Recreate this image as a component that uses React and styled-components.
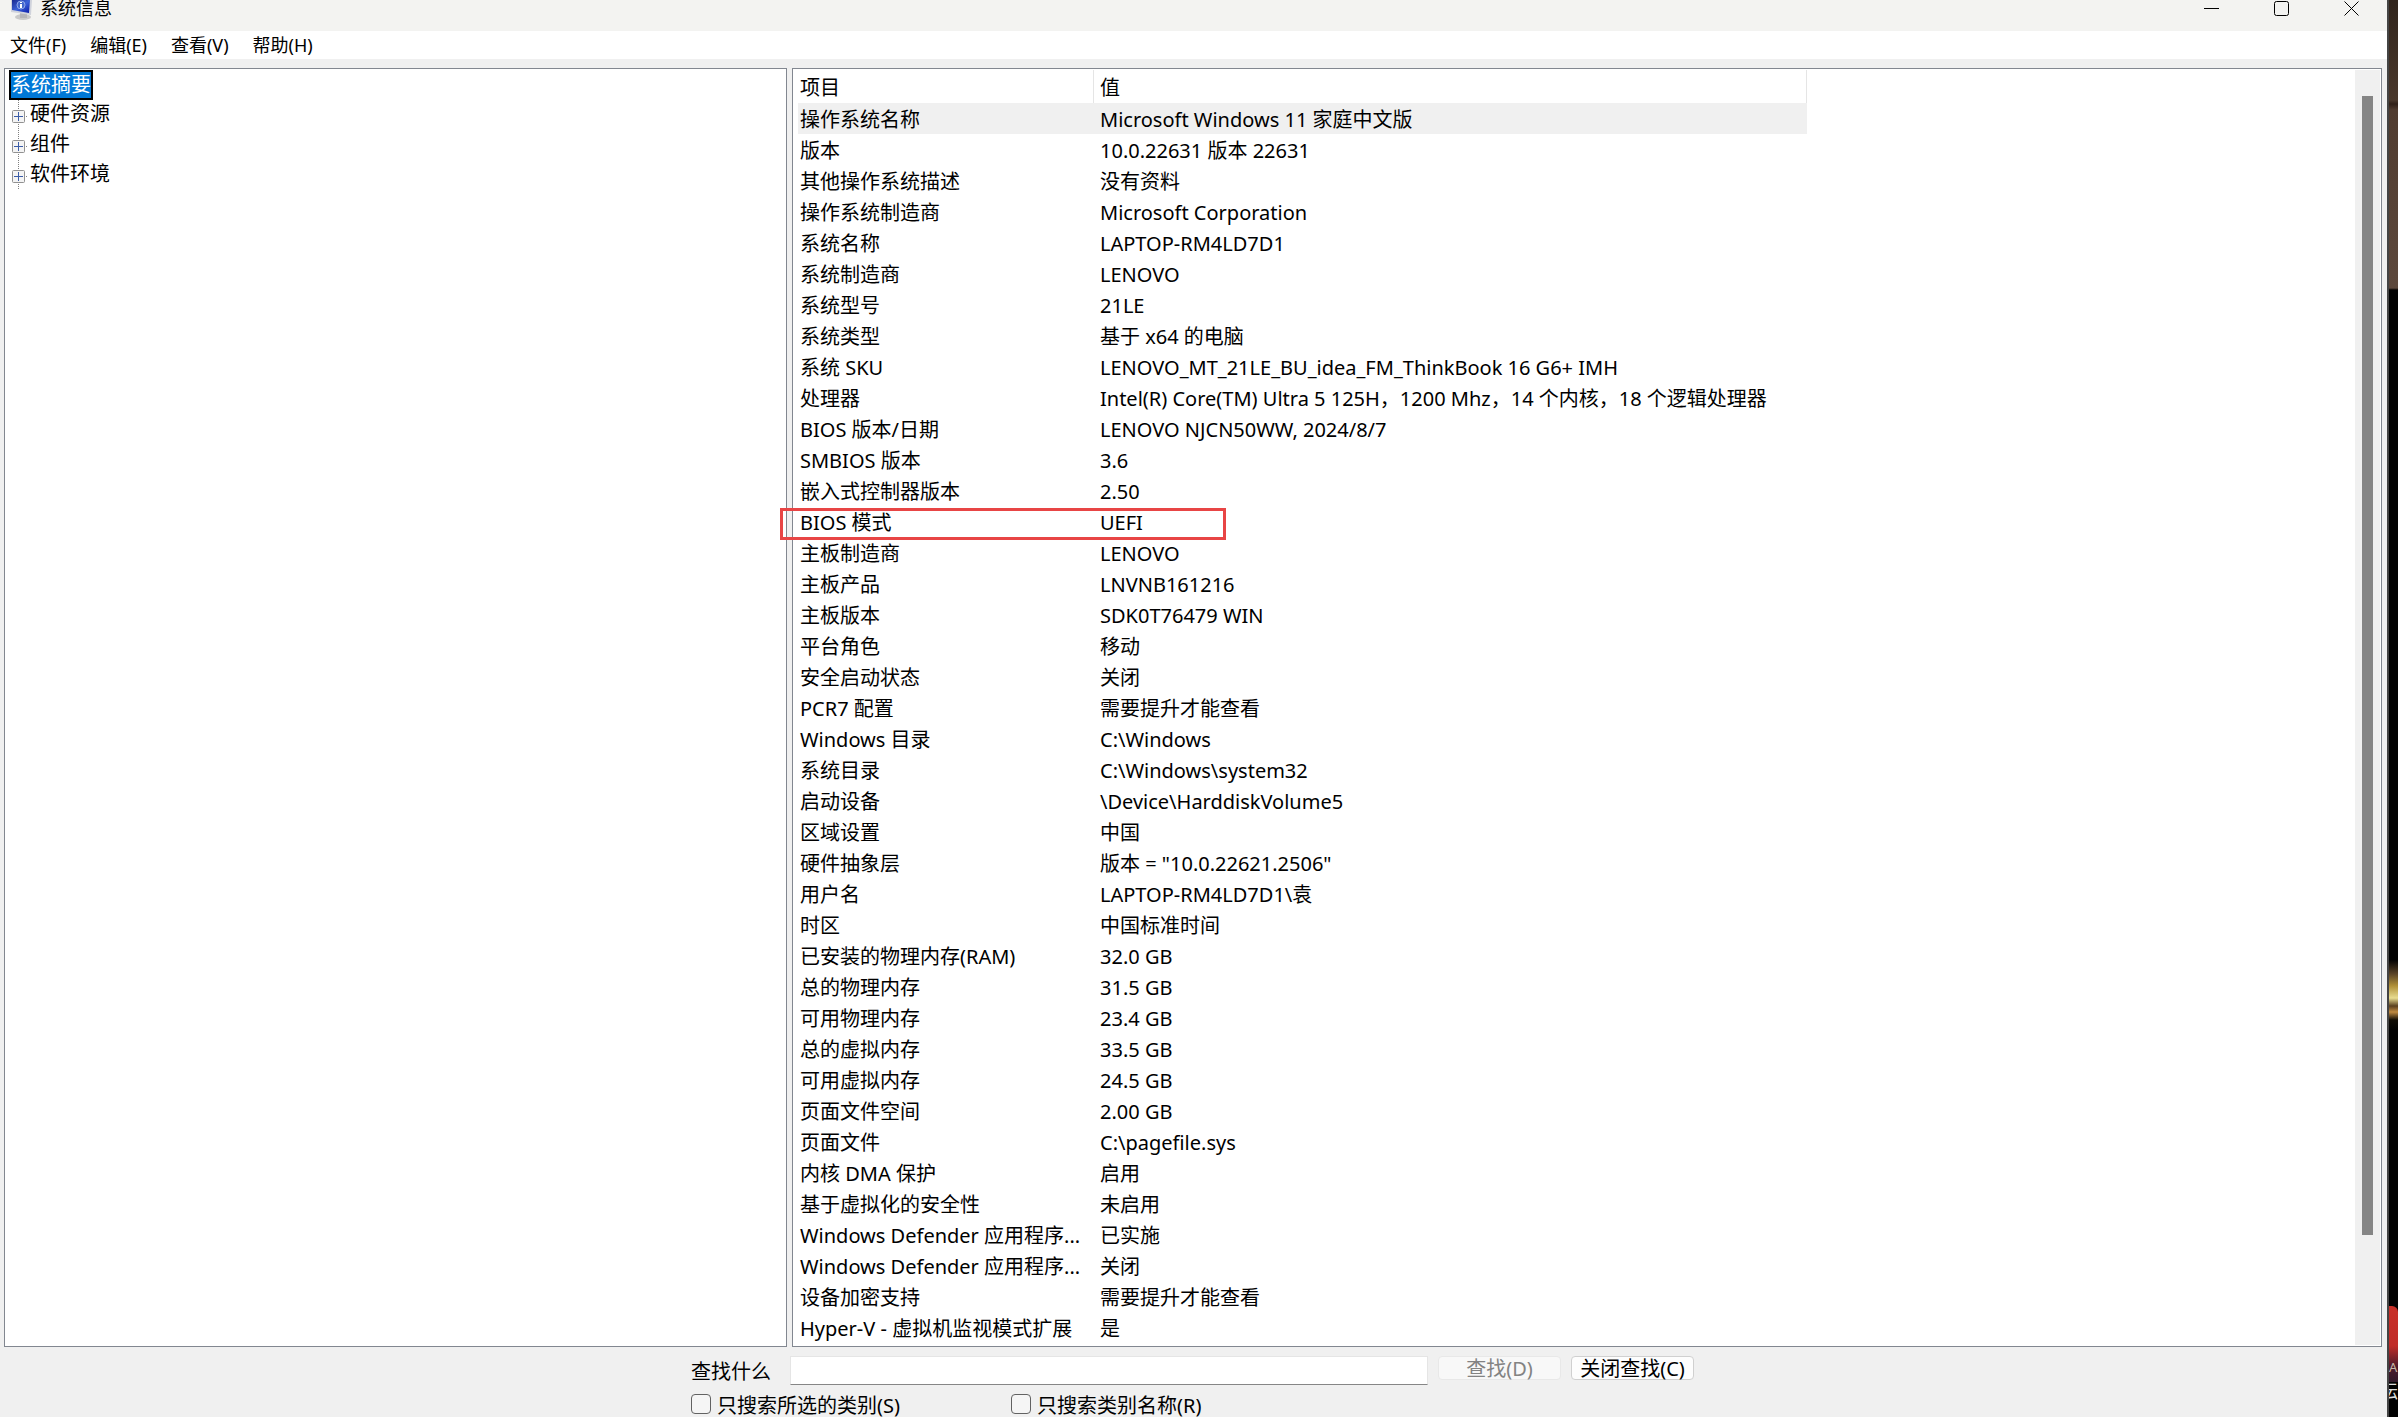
import styled, { createGlobalStyle } from 'styled-components';

const GlobalStyle = createGlobalStyle`
    *, *::after {
        box-sizing: border-box;
    }
    body {
        margin: 0;
        font-family: "Noto Sans", "Noto Sans CJK SC", sans-serif;
        font-size: 20px;
        color: #000;
        background-color: #020202;
    }
    button, input {
        font-family: inherit;
        font-size: inherit;
        color: inherit;
    }
`

const Screen = styled.div`
    display: flex;
    height: 100vh;
    overflow: hidden;
`

const AppWindow = styled.div`
    display: flex;
    flex-direction: column;
    flex: 1;
    min-width: 0;
    background-color: #f0f0f0;
`

const TitleBar = styled.header`
    display: flex;
    align-items: flex-start;
    height: 31px;
    padding-left: 10px;
    background-color: #f3f3f1;
`

const AppTitle = styled.h1`
    flex: 1;
    margin: 0 0 0 6px;
    font-size: 18px;
    font-weight: 400;
    line-height: 16px;
`

const CaptionButton = styled.button`
    display: flex;
    justify-content: center;
    width: 70px;
    height: 31px;
    padding: 0;
    border: none;
    background-color: transparent;
`

const MenuBar = styled.nav`
    display: flex;
    gap: 24px;
    height: 28px;
    padding-left: 10px;
    background-color: #fff;
`

const MenuButton = styled.button`
    padding: 0;
    border: none;
    background-color: transparent;
    font-size: 18px;
    line-height: 28px;
`

const Panes = styled.main`
    display: flex;
    flex: 1;
    gap: 5px;
    min-height: 0;
    padding: 9px 5px 0 4px;
`

const TreePane = styled.ul`
    width: 783px;
    margin: 0;
    padding: 1px 4px;
    list-style: none;
    border: 1px solid #828790;
    background-color: #fff;
`

const TreeRoot = styled.li`
    width: fit-content;
    border: 2px solid #000;
    background-color: #0078d7;
    color: #fff;
    line-height: 26px;
`

const TreeItem = styled.li`
    display: flex;
    align-items: flex-start;
    height: 30px;
    padding-left: 3px;
    line-height: 28px;
`

const ExpandButton = styled.button`
    display: flex;
    height: 30px;
    margin-right: 3px;
    padding: 0;
    border: none;
    background-color: transparent;
`

const DetailPane = styled.section`
    display: flex;
    flex: 1;
    justify-content: space-between;
    min-width: 0;
    padding: 1px 1px 1px 5px;
    border: 1px solid #828790;
    background-color: #fff;
`

const DetailTable = styled.table`
    width: 1009px;
    height: fit-content;
    table-layout: fixed;
    border-collapse: separate;
    border-spacing: 0;
    text-align: left;
`

const HeadCell = styled.th`
    width: ${props => props.$width};
    height: 33px;
    padding: 2px 0 0 ${props => props.$indent};
    border-right: 1px solid #e5e5e5;
    font-weight: 400;
    line-height: 31px;
`

const DetailRow = styled.tr`
    position: relative;
    background-color: ${props => props.$selected ? '#f0f0f0' : 'transparent'};
`

const Cell = styled.td`
    height: 31px;
    padding: 2px 0 0 ${props => props.$indent};
    overflow: hidden;
    line-height: 29px;
    white-space: nowrap;
    text-overflow: ellipsis;
`

const MarkedCell = styled(Cell)`
    overflow: visible;
    &::after {
        content: "";
        position: absolute;
        top: 2px;
        left: -18px;
        width: 446px;
        height: 32px;
        border: 3px solid #e84545;
    }
`

const ScrollTrack = styled.div`
    width: 25px;
    padding: 26px 7px 110px;
    background-color: #f0f0f0;
`

const ScrollThumb = styled.div`
    height: 100%;
    background-color: #858585;
`

const SearchForm = styled.form`
    display: grid;
    grid-template-columns: 99px 221px 417px 123px 123px;
    grid-template-rows: 33px 30px;
    height: 70px;
    padding: 9px 0 0 691px;
`

const SearchLabel = styled.label`
    line-height: 32px;
`

const SearchInput = styled.input`
    grid-column: 2 / 4;
    height: 29px;
    border: 1px solid #e5e5e5;
    border-bottom-color: #868686;
    background-color: #fff;
`

const SearchButton = styled.button`
    width: 123px;
    height: 24px;
    margin-left: ${props => props.$gap};
    padding: 2px 0 0;
    border: 1px solid #d0d0d0;
    border-radius: 4px;
    background-color: #fdfdfd;
    line-height: 20px;
    white-space: nowrap;
    &:disabled {
        border-color: #e8e8e8;
        background-color: #f8f8f8;
        color: #838383;
    }
`

const CheckLabel = styled.label`
    display: flex;
    align-items: center;
    grid-column: ${props => props.$column};
    height: 30px;
    white-space: nowrap;
`

const Checkbox = styled.input`
    appearance: none;
    width: 20px;
    height: 20px;
    margin: 0 6px 0 0;
    border: 1px solid #626262;
    border-radius: 4px;
    background-color: #f5f5f5;
`

const Desktop = styled.aside`
    display: flex;
    flex-direction: column;
    justify-content: flex-end;
    width: 11px;
    overflow: hidden;
    border-left: 2px solid #444;
    background: linear-gradient(#30241c 0, #4a382c 100px, #302018 104px, #503c30 110px, #5c483c 288px, #020202 290px, #020202 960px, #5a4326 974px, #b09038 986px, #e8dc90 998px, #5a4020 1006px, #c08a40 1012px, #100c04 1020px, #020202 1030px);
`

const DesktopIcon = styled.div`
    height: 76px;
    padding-top: 50px;
    border-radius: 0 6px 0 0;
    background: linear-gradient(#c83028 0, #c02c28 40px, #501c2c 60px, #301828 76px);
    color: #c8b8a8;
    font-size: 13px;
    line-height: 22px;
`

const DesktopLabel = styled.div`
    height: 35px;
    color: #ddd;
    font-size: 18px;
    line-height: 18px;
    white-space: nowrap;
    direction: rtl;
`

const rows = [
    ['操作系统名称', 'Microsoft Windows 11 家庭中文版'],
    ['版本', '10.0.22631 版本 22631'],
    ['其他操作系统描述', '没有资料'],
    ['操作系统制造商', 'Microsoft Corporation'],
    ['系统名称', 'LAPTOP-RM4LD7D1'],
    ['系统制造商', 'LENOVO'],
    ['系统型号', '21LE'],
    ['系统类型', '基于 x64 的电脑'],
    ['系统 SKU', 'LENOVO_MT_21LE_BU_idea_FM_ThinkBook 16 G6+ IMH'],
    ['处理器', 'Intel(R) Core(TM) Ultra 5 125H，1200 Mhz，14 个内核，18 个逻辑处理器'],
    ['BIOS 版本/日期', 'LENOVO NJCN50WW, 2024/8/7'],
    ['SMBIOS 版本', '3.6'],
    ['嵌入式控制器版本', '2.50'],
    ['BIOS 模式', 'UEFI'],
    ['主板制造商', 'LENOVO'],
    ['主板产品', 'LNVNB161216'],
    ['主板版本', 'SDK0T76479 WIN'],
    ['平台角色', '移动'],
    ['安全启动状态', '关闭'],
    ['PCR7 配置', '需要提升才能查看'],
    ['Windows 目录', 'C:\\Windows'],
    ['系统目录', 'C:\\Windows\\system32'],
    ['启动设备', '\\Device\\HarddiskVolume5'],
    ['区域设置', '中国'],
    ['硬件抽象层', '版本 = "10.0.22621.2506"'],
    ['用户名', 'LAPTOP-RM4LD7D1\\袁'],
    ['时区', '中国标准时间'],
    ['已安装的物理内存(RAM)', '32.0 GB'],
    ['总的物理内存', '31.5 GB'],
    ['可用物理内存', '23.4 GB'],
    ['总的虚拟内存', '33.5 GB'],
    ['可用虚拟内存', '24.5 GB'],
    ['页面文件空间', '2.00 GB'],
    ['页面文件', 'C:\\pagefile.sys'],
    ['内核 DMA 保护', '启用'],
    ['基于虚拟化的安全性', '未启用'],
    ['Windows Defender 应用程序...', '已实施'],
    ['Windows Defender 应用程序...', '关闭'],
    ['设备加密支持', '需要提升才能查看'],
    ['Hyper-V - 虚拟机监视模式扩展', '是'],
]

const menus = ['文件(F)', '编辑(E)', '查看(V)', '帮助(H)']
const categories = ['硬件资源', '组件', '软件环境']

const ComputerIcon = () => (
    <svg width="24" height="20" viewBox="0 0 24 20">
        <defs>
            <linearGradient id="monitor" x1="0" y1="0" x2="1" y2="1">
                <stop offset="0" stopColor="#1a2a90" />
                <stop offset="0.5" stopColor="#3c62d8" />
                <stop offset="1" stopColor="#0818a8" />
            </linearGradient>
        </defs>
        <ellipse cx="13" cy="17" rx="8" ry="3" fill="#c9c9c9" />
        <path d="M10 12l7 2v4h-7z" fill="#b4b4b8" />
        <path d="M1 0h21l-1 15L1 12z" fill="#d0d3dc" />
        <path d="M2 0h18l-1 13L2 10z" fill="url(#monitor)" />
        <circle cx="11" cy="5" r="4" fill="#4468cc" stroke="#8ea6e8" />
        <path d="M11 2v1M11 4v4" stroke="#fff" strokeWidth="2" />
    </svg>
)

// plus box with the dotted connector of the tree
const PlusBox = () => (
    <svg width="15" height="30" viewBox="0 0 15 30">
        <path d="M6.5 0v30M14 16.5h1" stroke="#808080" strokeDasharray="1 1" />
        <rect x="0.5" y="10.5" width="12" height="12" rx="1" fill="#f4f4f4" stroke="#919191" />
        <path d="M2 16.5h9M6.5 12v9" stroke="#3b5da8" />
    </svg>
)

const App = () => {
    return (
        <>
            <GlobalStyle />
            <Screen>
                <AppWindow>
                    <TitleBar>
                        <ComputerIcon />
                        <AppTitle>系统信息</AppTitle>
                        <CaptionButton aria-label="最小化">
                            <svg width="16" height="17"><path d="M0 8.5h15" stroke="#000" /></svg>
                        </CaptionButton>
                        <CaptionButton aria-label="最大化">
                            <svg width="16" height="17"><rect x="0.5" y="1.5" width="14" height="14" rx="2" fill="none" stroke="#000" /></svg>
                        </CaptionButton>
                        <CaptionButton aria-label="关闭">
                            <svg width="16" height="17"><path d="M0.5 1.5l14 14M14.5 1.5l-14 14" stroke="#000" /></svg>
                        </CaptionButton>
                    </TitleBar>
                    <MenuBar>
                        {menus.map(menu => <MenuButton key={menu}>{menu}</MenuButton>)}
                    </MenuBar>
                    <Panes>
                        <TreePane>
                            <TreeRoot>系统摘要</TreeRoot>
                            {categories.map(name => (
                                <TreeItem key={name}>
                                    <ExpandButton aria-label={name}><PlusBox /></ExpandButton>
                                    {name}
                                </TreeItem>
                            ))}
                        </TreePane>
                        <DetailPane>
                            <DetailTable>
                                <thead>
                                    <tr>
                                        <HeadCell $width="296px" $indent="2px">项目</HeadCell>
                                        <HeadCell $width="auto" $indent="6px">值</HeadCell>
                                    </tr>
                                </thead>
                                <tbody>
                                    {rows.map(([item, value], index) => {
                                        const NameCell = item === 'BIOS 模式' ? MarkedCell : Cell
                                        return (
                                            <DetailRow key={index} $selected={index === 0}>
                                                <NameCell $indent="2px">{item}</NameCell>
                                                <Cell $indent="6px">{value}</Cell>
                                            </DetailRow>
                                        )
                                    })}
                                </tbody>
                            </DetailTable>
                            <ScrollTrack>
                                <ScrollThumb />
                            </ScrollTrack>
                        </DetailPane>
                    </Panes>
                    <SearchForm onSubmit={e => e.preventDefault()}>
                        <SearchLabel htmlFor="find">查找什么</SearchLabel>
                        <SearchInput id="find" type="text" />
                        <SearchButton $gap="10px" disabled>查找(D)</SearchButton>
                        <SearchButton $gap="20px" type="button">关闭查找(C)</SearchButton>
                        <CheckLabel $column="1 / 3"><Checkbox type="checkbox" />只搜索所选的类别(S)</CheckLabel>
                        <CheckLabel $column="3"><Checkbox type="checkbox" />只搜索类别名称(R)</CheckLabel>
                    </SearchForm>
                </AppWindow>
                <Desktop>
                    <DesktopIcon>A</DesktopIcon>
                    <DesktopLabel>坛</DesktopLabel>
                </Desktop>
            </Screen>
        </>
    )
}
export default App
